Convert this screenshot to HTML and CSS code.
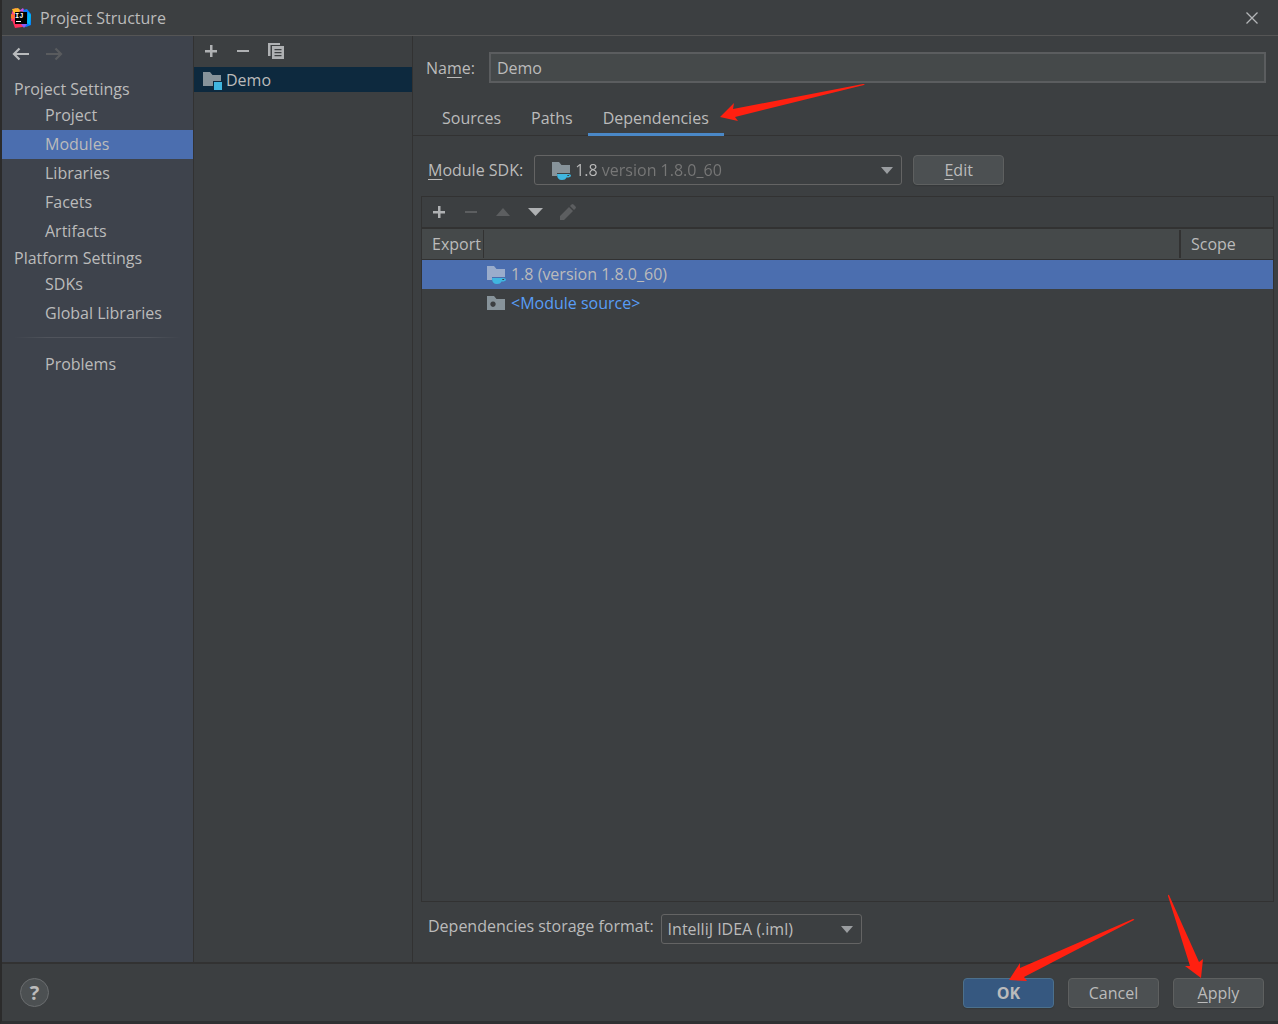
FILE: index.html
```html
<!DOCTYPE html>
<html lang="en">
<head>
<meta charset="utf-8">
<title>Project Structure</title>
<link rel="stylesheet" href="styles.css">
</head>
<body>
<svg class="defs" aria-hidden="true">
  <symbol id="folder-module" viewBox="0 0 20 20">
    <path class="folder" d="M1 2h7l2.500 3H19v6h-8v5H1z"/>
    <path class="accent" d="M12 12h8v8h-8z"/>
  </symbol>
  <symbol id="folder-sdk" viewBox="0 0 20 20">
    <path class="folder" d="M1 2h7l2.500 3H19v8H6v3H1z"/>
    <path class="accent" d="M6 14h10q4-.5 4 1.500 0 2-4.500 2-1 2.500-4.500 2.500-5 0-5-6z"/>
    <path d="M16.300 15h1.800v1h-1.800z" fill="#3c3f41"/>
  </symbol>
  <symbol id="folder-source" viewBox="0 0 20 20">
    <path class="folder" fill-rule="evenodd" d="M1 3h7l2.500 3H19v11H1zM7 8.500a2.700 2.700 0 1 0 .01 0z"/>
  </symbol>
  <symbol id="plus" viewBox="0 0 16 16"><path d="M7 2h2.500v5H14v2.500H9.500V14H7V9.500H2V7h5z" fill="currentColor"/></symbol>
  <symbol id="minus" viewBox="0 0 16 16"><path d="M2 7h12v2H2z" fill="currentColor"/></symbol>
</svg>

<div class="window">
  <header class="titlebar">
    <svg class="logo" viewBox="0 0 20 20" aria-hidden="true">
      <path d="M1 4 4 0l5 2-3 9-6 2z" fill="#ff3c8c"/>
      <path d="M1 1l6-1 3 3-7 3z" fill="#fdb62b"/>
      <path d="M0 6l4 1-1 5-3-2z" fill="#fe6f2e"/>
      <path d="M8 3l4-3 2 4z" fill="#c653e8"/>
      <path d="M12 2l4-1 4 5v11l-5 2-7-2 8-6z" fill="#087cfa"/>
      <path d="M17 4l3 3-1 10-3-2z" fill="#00b8f1"/>
      <path d="M1 12l4-2 10 8-4 1-7 1z" fill="#fe315d"/>
      <path d="M10 16h6l-3 4z" fill="#8b5cf6"/>
      <path d="M4 4h12v12H4z" fill="#000"/>
      <text x="4" y="10" class="logo-text">IJ</text>
      <path d="M5 13h5v1H5z" fill="#fff"/>
    </svg>
    <h1 class="title">Project Structure</h1>
    <button class="close" type="button" aria-label="Close">
      <svg viewBox="0 0 12 12" width="12" height="12"><path d="M.5.5l11 11M11.500.5l-11 11" stroke="#b4b6b8" stroke-width="1.300"/></svg>
    </button>
  </header>

  <div class="content">
    <nav class="sidebar">
      <div class="history">
        <button type="button" aria-label="Back"><svg viewBox="0 0 18 14" width="18" height="14"><path d="M17 7H2M7.500 1.500 2 7l5.500 5.500" fill="none" stroke="#b9bbbd" stroke-width="2.200"/></svg></button>
        <button type="button" aria-label="Forward"><svg viewBox="0 0 18 14" width="18" height="14"><path d="M1 7h15M10.500 1.500 16 7l-5.500 5.500" fill="none" stroke="#595b5e" stroke-width="2.200"/></svg></button>
      </div>
      <h2>Project Settings</h2>
      <a href="#project">Project</a>
      <a href="#modules" class="selected" aria-current="page">Modules</a>
      <a href="#libraries">Libraries</a>
      <a href="#facets">Facets</a>
      <a href="#artifacts">Artifacts</a>
      <h2>Platform Settings</h2>
      <a href="#sdks">SDKs</a>
      <a href="#global">Global Libraries</a>
      <hr>
      <a href="#problems">Problems</a>
    </nav>

    <section class="modules">
      <div class="toolbar">
        <button type="button" aria-label="Add"><svg width="16" height="16"><use href="#plus"/></svg></button>
        <button type="button" aria-label="Remove"><svg width="16" height="16"><use href="#minus"/></svg></button>
        <button type="button" aria-label="Copy"><svg width="18" height="18" viewBox="0 0 18 18"><path d="M1 1h12v2H3.500v11H1z" fill="#afb1b3"/><path fill-rule="evenodd" d="M5 4h12v13H5zM7.500 7v1.300h7V7zM7.500 10v1.300h7V10zM7.500 13v1.300h7V13z" fill="#afb1b3"/></svg></button>
      </div>
      <button class="module" type="button"><svg class="icon" width="20" height="20"><use href="#folder-module"/></svg>Demo</button>
    </section>

    <main class="editor">
      <div class="name-row">
        <label for="name">Na<u>m</u>e:</label>
        <input id="name" type="text" value="Demo">
      </div>

      <div class="tabs" role="tablist">
        <button type="button" role="tab">Sources</button>
        <button type="button" role="tab">Paths</button>
        <div class="pointed">
          <button type="button" role="tab" class="active" aria-selected="true">Dependencies</button>
          <svg class="arrow arrow-tab" viewBox="0 0 146 40" aria-hidden="true"><path d="M0 33 14 19l-1 6L143 0q3 0 1 1L15 33l3 4z"/></svg>
        </div>
      </div>

      <div class="panel">
        <div class="sdk-row">
          <label for="sdk"><u>M</u>odule SDK:</label>
          <div class="combo combo-sdk">
            <svg class="icon" width="20" height="20"><use href="#folder-sdk"/></svg>
            <select id="sdk"><option>1.8 version 1.8.0_60</option></select>
          </div>
          <button class="btn" type="button"><u>E</u>dit</button>
        </div>

        <div class="deps">
          <div class="toolbar">
            <button type="button" aria-label="Add"><svg width="16" height="16"><use href="#plus"/></svg></button>
            <button type="button" aria-label="Remove" disabled><svg width="16" height="16"><use href="#minus"/></svg></button>
            <button type="button" aria-label="Move up" disabled><svg width="16" height="16" viewBox="0 0 16 16"><path d="M8 4l7 8H1z" fill="currentColor"/></svg></button>
            <button type="button" aria-label="Move down"><svg width="16" height="16" viewBox="0 0 16 16"><path d="M1 4h15l-7.500 8z" fill="currentColor"/></svg></button>
            <button type="button" aria-label="Edit" disabled><svg width="18" height="18" viewBox="0 0 18 18"><path d="M1 17v-4l9-9 4 4-9 9zM11 3l1.500-1.500q1-1 2 0l2 2q1 1 0 2L15 7z" fill="currentColor"/></svg></button>
          </div>
          <table>
            <colgroup><col class="col-export"><col><col class="col-scope"></colgroup>
            <thead><tr><th><span>Export</span></th><th aria-label="Dependency"><span></span></th><th><span>Scope</span></th></tr></thead>
            <tbody>
              <tr class="selected"><td></td><td><div class="entry"><svg class="icon" width="20" height="20"><use href="#folder-sdk"/></svg>1.8 (version 1.8.0_60)</div></td><td></td></tr>
              <tr><td></td><td><div class="entry source"><svg class="icon" width="20" height="20"><use href="#folder-source"/></svg>&lt;Module source&gt;</div></td><td></td></tr>
            </tbody>
          </table>
        </div>

        <div class="format-row">
          <label for="format">Dependencies storage format:</label>
          <div class="combo combo-format">
            <select id="format"><option>IntelliJ IDEA (.iml)</option></select>
          </div>
        </div>
      </div>
    </main>
  </div>

  <footer class="footer">
    <button class="help" type="button" aria-label="Help">?</button>
    <div class="actions">
      <div class="pointed">
        <button class="btn primary" type="button">OK</button>
        <svg class="arrow arrow-ok" viewBox="0 0 126 64" aria-hidden="true"><path d="M0 62 11 45v5L124 1q2 0 1 1L15 59l3 4z"/></svg>
      </div>
      <button class="btn" type="button">Cancel</button>
      <div class="pointed">
        <button class="btn" type="button"><u>A</u>pply</button>
        <svg class="arrow arrow-apply" viewBox="0 0 38 84" aria-hidden="true"><path d="M34 84 36 65l-4 3L2 1Q1 0 1 2l22 70-5 0z"/></svg>
      </div>
    </div>
  </footer>
</div>
</body>
</html>
```
FILE: styles.css
```css
:root {
  --bg: #3c3f41;
  --text: #bbbbbb;
  --line: #323232;
  --select: #4b6eaf;
  --border: #646464;
  --folder: #87939a;
}

* { box-sizing: border-box; }

body {
  margin: 0;
  background: var(--bg);
  color: var(--text);
  font: 16px/20px "Open Sans", "Noto Sans", sans-serif;
}

button, input, select { font: inherit; color: inherit; }
button { background: none; border: 0; padding: 0; }
u { text-underline-offset: 3px; text-decoration-thickness: 1px; text-decoration-skip-ink: none; }
svg { display: block; flex: none; }

.defs { display: none; }
.folder { fill: var(--folder); }
.accent { fill: #40b6e0; }

.window {
  min-height: 100vh;
  display: flex;
  flex-direction: column;
  border-left: 2px solid #2b2b2b;
  border-bottom: 3px solid #2f3032;
}

/* Title bar */
.titlebar {
  display: flex;
  align-items: center;
  height: 36px;
  padding: 0 20px 0 9px;
  border-bottom: 1px solid #555555;
}
.logo { width: 20px; height: 20px; }
.logo-text { font: bold 7px "Liberation Mono", monospace; fill: #fff; }
.title { margin: 0 auto 0 9px; font: inherit; }

.content { flex: 1; display: flex; }

/* Sidebar */
.sidebar {
  width: 192px;
  background: #3e434c;
  border-right: 1px solid var(--line);
}
.history { display: flex; gap: 15px; height: 41px; padding: 11px 10px; }
.history button { height: 14px; }
.sidebar h2 { margin: 0; padding-left: 12px; font: inherit; line-height: 24px; }
.sidebar a {
  display: block;
  padding-left: 43px;
  line-height: 29px;
  color: inherit;
  text-decoration: none;
}
.sidebar .selected { background: var(--select); }
.sidebar hr {
  height: 1px;
  margin: 9px 12px 12px;
  border: 0;
  background: linear-gradient(90deg, transparent, #50545c 20%, #50545c 80%, transparent);
}

/* Module list */
.modules { width: 219px; border-right: 1px solid var(--line); }
.toolbar { display: flex; align-items: center; gap: 16px; height: 30px; padding: 0 9px; color: #afb1b3; }
.toolbar button:disabled { color: #5c5e60; }
.modules .toolbar { height: 31px; padding-bottom: 2px; }
.module {
  display: flex;
  align-items: center;
  gap: 4px;
  width: 100%;
  height: 25px;
  padding: 0 8px;
  background: #0d293e;
}

/* Editor */
.editor { flex: 1; min-width: 0; display: flex; flex-direction: column; }
.name-row { display: flex; align-items: center; gap: 14px; padding: 16px 12px 16px 13px; }
.name-row input {
  flex: 1;
  min-width: 0;
  height: 31px;
  padding: 0 6px;
  background: #45494a;
  border: 2px solid #5b5d5f;
}

.tabs { display: flex; height: 37px; padding-left: 14px; border-bottom: 1px solid var(--line); }
.tabs button { height: 37px; padding: 0 15px; }
.tabs .active { border-bottom: 3px solid #4a88c7; padding-top: 3px; }

.pointed { position: relative; }
.arrow { position: absolute; fill: #ff2010; overflow: visible; pointer-events: none; }
.arrow-tab { left: 132px; top: -15px; width: 146px; height: 40px; }
.arrow-ok { left: 46px; top: -60px; width: 126px; height: 64px; }
.arrow-apply { left: -6px; top: -84px; width: 38px; height: 84px; }

.panel { flex: 1; display: flex; flex-direction: column; padding: 19px 4px 18px 8px; }
.sdk-row { display: flex; align-items: center; gap: 11px; padding-left: 7px; margin-bottom: 11px; }

.combo { position: relative; border: 1px solid var(--border); border-radius: 3px; }
.combo::after {
  content: "";
  position: absolute;
  right: 8px;
  top: 11px;
  border: 6px solid transparent;
  border-top: 7px solid #9a9da0;
  border-bottom: 0;
  pointer-events: none;
}
.combo select {
  display: block;
  width: 100%;
  height: 28px;
  padding: 0 6px;
  appearance: none;
  background: none;
  border: 0;
}
.combo-sdk { display: flex; align-items: center; width: 368px; padding-left: 16px; }
.combo-sdk select {
  padding: 0 4px;
  color: transparent;
  background: linear-gradient(90deg, #bbbbbb 28px, #777777 28px);
  background-clip: text;
}
.combo-sdk option { color: #bbbbbb; background: #3c3f41; }
.combo-format { width: 201px; }

.btn {
  width: 91px;
  height: 30px;
  background: #4c5052;
  border: 1px solid #5e6060;
  border-radius: 4px;
  box-shadow: 0 1px 1px #35383a;
}
.primary { background: #365880; border-color: #4c708c; font-weight: bold; }

/* Dependency table */
.deps { flex: 1; border: 1px solid var(--line); }
.deps table { width: 100%; border-collapse: collapse; table-layout: fixed; }
.col-export { width: 62px; }
.col-scope { width: 92px; }
.deps thead { background: #45494a; border-top: 2px solid var(--line); border-bottom: 1px solid var(--line); }
.deps th { height: 31px; padding: 1px 0; font-weight: normal; text-align: left; }
.deps th span { display: block; height: 28px; line-height: 28px; padding-left: 10px; border-right: 1px solid var(--line); }
.deps th:nth-child(2) span { border-right-width: 2px; }
.deps th:last-child span { border: 0; }
.deps td { height: 29px; padding: 0; }
.deps .selected { background: var(--select); --folder: #9aaccb; }
.entry { display: flex; align-items: center; gap: 5px; padding-left: 2px; }
.source { color: #589df6; }

.format-row { display: flex; gap: 7px; margin-top: 12px; padding-left: 7px; }
.format-row label { padding-top: 2px; }

/* Footer */
.footer {
  display: flex;
  align-items: center;
  justify-content: space-between;
  height: 59px;
  padding: 0 14px 0 18px;
  border-top: 2px solid var(--line);
}
.help {
  width: 29px;
  height: 29px;
  border: 1px solid #6a6d6f;
  border-radius: 50%;
  background: #4c5052;
  font-size: 20px;
  font-weight: bold;
}
.actions { display: flex; gap: 14px; }
```
